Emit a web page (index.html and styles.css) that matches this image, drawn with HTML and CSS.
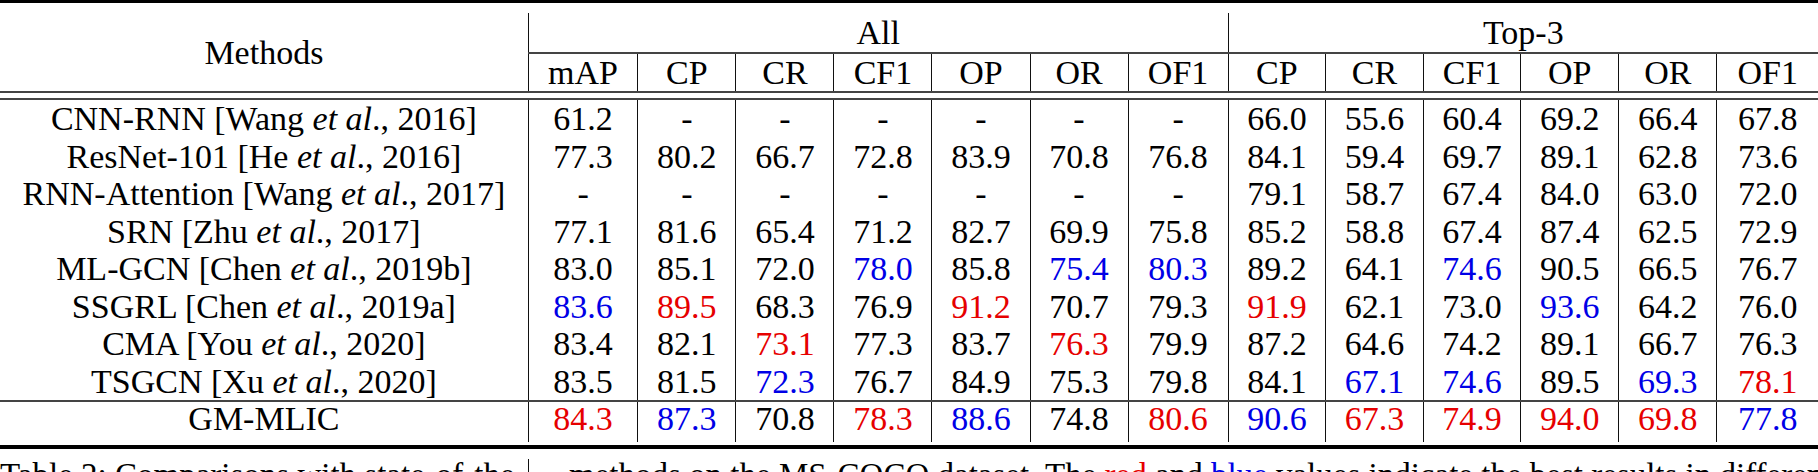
FILE: index.html
```html
<!DOCTYPE html>
<html lang="en">
<head>
  <meta charset="UTF-8">
  <title>Table 2: MS-COCO comparison</title>
  <link rel="stylesheet" href="styles.css">
</head>
<body>
<div class="rule"></div>
<table class="results">
  <colgroup>
    <col class="c-method">
    <col class="c-map">
    <col class="c-98"><col class="c-98"><col class="c-98"><col class="c-98"><col class="c-98">
    <col class="c-100">
    <col class="c-97"><col class="c-97"><col class="c-97"><col class="c-98"><col class="c-98">
    <col class="c-101">
  </colgroup>
  <thead>
    <tr class="groups">
      <th rowspan="2" class="methods">Methods</th>
      <th colspan="7">All</th>
      <th colspan="6">Top-3</th>
    </tr>
    <tr class="metrics">
      <th>mAP</th><th>CP</th><th>CR</th><th>CF1</th><th>OP</th><th>OR</th><th>OF1</th>
      <th>CP</th><th>CR</th><th>CF1</th><th>OP</th><th>OR</th><th>OF1</th>
    </tr>
  </thead>
  <tbody>
    <tr class="gap"><td colspan="14"></td></tr>
    <tr>
      <td>CNN-RNN [Wang <i>et al</i>., 2016]</td>
      <td>61.2</td><td>-</td><td>-</td><td>-</td><td>-</td><td>-</td><td>-</td>
      <td>66.0</td><td>55.6</td><td>60.4</td><td>69.2</td><td>66.4</td><td>67.8</td>
    </tr>
    <tr>
      <td>ResNet-101 [He <i>et al</i>., 2016]</td>
      <td>77.3</td><td>80.2</td><td>66.7</td><td>72.8</td><td>83.9</td><td>70.8</td><td>76.8</td>
      <td>84.1</td><td>59.4</td><td>69.7</td><td>89.1</td><td>62.8</td><td>73.6</td>
    </tr>
    <tr>
      <td>RNN-Attention [Wang <i>et al</i>., 2017]</td>
      <td>-</td><td>-</td><td>-</td><td>-</td><td>-</td><td>-</td><td>-</td>
      <td>79.1</td><td>58.7</td><td>67.4</td><td>84.0</td><td>63.0</td><td>72.0</td>
    </tr>
    <tr>
      <td>SRN [Zhu <i>et al</i>., 2017]</td>
      <td>77.1</td><td>81.6</td><td>65.4</td><td>71.2</td><td>82.7</td><td>69.9</td><td>75.8</td>
      <td>85.2</td><td>58.8</td><td>67.4</td><td>87.4</td><td>62.5</td><td>72.9</td>
    </tr>
    <tr>
      <td>ML-GCN [Chen <i>et al</i>., 2019b]</td>
      <td>83.0</td><td>85.1</td><td>72.0</td><td class="b">78.0</td><td>85.8</td><td class="b">75.4</td><td class="b">80.3</td>
      <td>89.2</td><td>64.1</td><td class="b">74.6</td><td>90.5</td><td>66.5</td><td>76.7</td>
    </tr>
    <tr>
      <td>SSGRL [Chen <i>et al</i>., 2019a]</td>
      <td class="b">83.6</td><td class="r">89.5</td><td>68.3</td><td>76.9</td><td class="r">91.2</td><td>70.7</td><td>79.3</td>
      <td class="r">91.9</td><td>62.1</td><td>73.0</td><td class="b">93.6</td><td>64.2</td><td>76.0</td>
    </tr>
    <tr>
      <td>CMA [You <i>et al</i>., 2020]</td>
      <td>83.4</td><td>82.1</td><td class="r">73.1</td><td>77.3</td><td>83.7</td><td class="r">76.3</td><td>79.9</td>
      <td>87.2</td><td>64.6</td><td>74.2</td><td>89.1</td><td>66.7</td><td>76.3</td>
    </tr>
    <tr>
      <td>TSGCN [Xu <i>et al</i>., 2020]</td>
      <td>83.5</td><td>81.5</td><td class="b">72.3</td><td>76.7</td><td>84.9</td><td>75.3</td><td>79.8</td>
      <td>84.1</td><td class="b">67.1</td><td class="b">74.6</td><td>89.5</td><td class="b">69.3</td><td class="r">78.1</td>
    </tr>
    <tr class="ours">
      <td>GM-MLIC</td>
      <td class="r">84.3</td><td class="b">87.3</td><td>70.8</td><td class="r">78.3</td><td class="b">88.6</td><td>74.8</td><td class="r">80.6</td>
      <td class="b">90.6</td><td class="r">67.3</td><td class="r">74.9</td><td class="r">94.0</td><td class="r">69.8</td><td class="b">77.8</td>
    </tr>
  </tbody>
</table>
<div class="rule rule-bottom"></div>
<div class="caption">
  <span class="caption-left">Table 2: Comparisons with state-of-the</span>
  <span class="caption-right">methods on the MS-COCO dataset. The <span class="r">red</span> and <span class="b">blue</span> values indicate the best results in different metrics.</span>
</div>
</body>
</html>
```

FILE: styles.css
```css
body {
  margin: 0;
  background: #ffffff;
  color: #000000;
  font-family: "Liberation Serif", "Times New Roman", serif;
  font-size: 34px;
  width: 1818px;
  overflow: hidden;
}

.rule {
  height: 3px;
  background: #000000;
}

.rule-bottom {
  height: 4px;
  margin-top: 3px;
}

.results {
  border-collapse: collapse;
  table-layout: fixed;
  width: 1818px;
  margin-top: 10px;
}

.c-method { width: 528px; }
.c-map { width: 109.5px; }
.c-98 { width: 98px; }
.c-100 { width: 100px; }
.c-97 { width: 97.5px; }
.c-101 { width: 101px; }

.results th,
.results td {
  font-weight: normal;
  padding: 0;
  text-align: center;
  white-space: nowrap;
  height: 37.5px;
  line-height: 37px;
}

.results td:not(:first-child),
.groups th:not(:first-child),
.metrics th {
  border-left: 1px solid #111111;
}

.groups th {
  height: 39px;
  line-height: 39px;
  border-bottom: 2px solid #444444;
}

.metrics th {
  height: 37px;
  border-bottom: 2px solid #444444;
}

.results .gap td {
  height: 5px;
  line-height: 0;
  border-bottom: 2px solid #444444;
}

.ours td {
  border-top: 2px solid #444444;
  height: 40px;
  line-height: 34px;
  vertical-align: top;
}

.r { color: #e60000; }
.b { color: #0000e6; }

.caption {
  display: flex;
  margin-top: 10px;
  font-size: 33px;
  line-height: 33px;
  white-space: nowrap;
}

.caption-left {
  width: 528px;
  flex-shrink: 0;
  border-right: 1px solid #111111;
}

.caption-right {
  padding-left: 40px;
}
```
